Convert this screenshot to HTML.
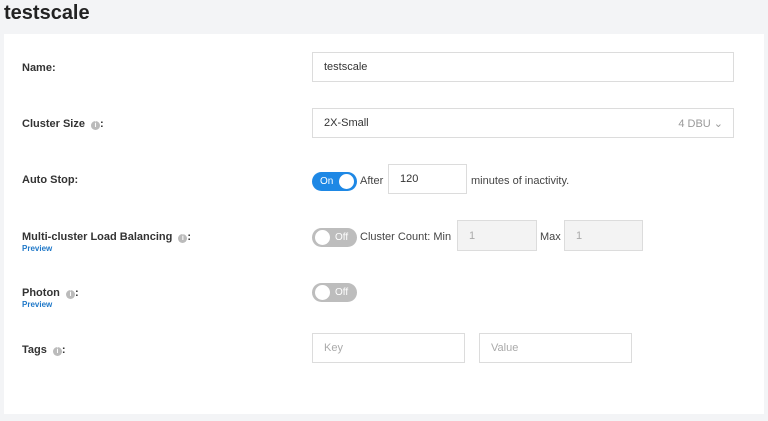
<!DOCTYPE html><html><head><style>
body{margin:0;width:768px;height:421px;background:#f3f4f6;font-family:"Liberation Sans",sans-serif;position:relative;overflow:hidden;color:#333}
h1{position:absolute;left:4px;top:0;margin:0;font-size:20px;font-weight:bold;color:#222;line-height:26px}
.card{position:absolute;left:4px;top:34px;width:760px;height:380px;background:#fff}
.lbl{position:absolute;left:22px;font-size:11px;font-weight:bold;color:#333}
.pv{display:block;font-size:8px;color:#1f78c8;font-weight:bold;margin-top:1px}
.inp{position:absolute;border:1px solid #dcdcdc;box-sizing:border-box;font-size:11px;color:#333;padding-left:11px;display:flex;align-items:center;background:#fff}
.dis{background:#f3f3f3;color:#aaa}
.ph{color:#aaa}
.i{display:inline-block;width:9px;height:9px;border-radius:50%;background:#bbb;color:#fff;font-size:7px;text-align:center;line-height:9px;vertical-align:0px;margin-left:3px}
.tg{position:absolute;left:312px;width:45px;height:19px;border-radius:10px;box-sizing:border-box}
.tg b{position:absolute;top:2px;width:15px;height:15px;border-radius:50%;background:#fff}
.tg span{position:absolute;top:4px;font-size:10px;line-height:12px;color:#fff}
.t{position:absolute;font-size:11px;color:#444}
</style></head><body>
<h1>testscale</h1>
<div class="card"></div>
<div class="lbl" style="top:62px">Name:</div>
<div class="inp" style="left:312px;top:52px;width:422px;height:30px">testscale</div>
<div class="lbl" style="top:118px">Cluster Size <span class="i">i</span>:</div>
<div class="inp" style="left:312px;top:108px;width:422px;height:30px">2X-Small<span style="position:absolute;right:10px;color:#999">4 DBU &#8964;</span></div>
<div class="lbl" style="top:174px">Auto Stop:</div>
<div class="tg" style="top:172px;background:#1e88e5"><span style="left:8px">On</span><b style="left:27px"></b></div>
<div class="t" style="left:360px;top:175px">After</div>
<div class="inp" style="left:388px;top:164px;width:79px;height:30px">120</div>
<div class="t" style="left:471px;top:175px">minutes of inactivity.</div>
<div class="lbl" style="top:231px">Multi-cluster Load Balancing <span class="i">i</span>:<span class="pv">Preview</span></div>
<div class="tg" style="top:228px;background:#bdbdbd"><b style="left:3px"></b><span style="left:23px">Off</span></div>
<div class="t" style="left:360px;top:231px">Cluster Count: Min</div>
<div class="inp dis" style="left:457px;top:220px;width:80px;height:31px">1</div>
<div class="t" style="left:540px;top:231px">Max</div>
<div class="inp dis" style="left:564px;top:220px;width:79px;height:31px">1</div>
<div class="lbl" style="top:287px">Photon <span class="i">i</span>:<span class="pv">Preview</span></div>
<div class="tg" style="top:283px;background:#bdbdbd"><b style="left:3px"></b><span style="left:23px">Off</span></div>
<div class="lbl" style="top:344px">Tags <span class="i">i</span>:</div>
<div class="inp ph" style="left:312px;top:333px;width:153px;height:30px">Key</div>
<div class="inp ph" style="left:479px;top:333px;width:153px;height:30px">Value</div>
</body></html>
